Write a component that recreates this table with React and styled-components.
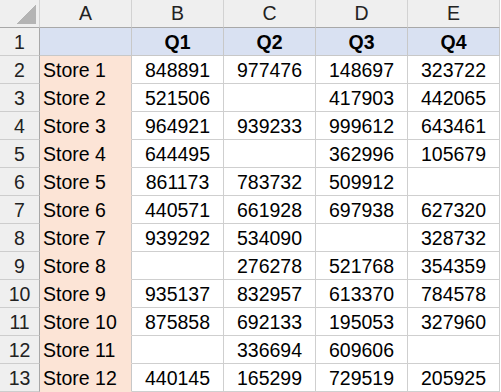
import React from "react";
import styled, { createGlobalStyle } from "styled-components";

const Global = createGlobalStyle`
  html, body { margin: 0; padding: 0; background: #ffffff; }
  body { font-family: "Liberation Sans", Arial, sans-serif; }
`;

const Sheet = styled.div`
  display: grid;
  grid-template-columns: 40px repeat(5, 92px);
  grid-auto-rows: 28px;
  width: 500px;
  font-family: "Liberation Sans", Arial, sans-serif;
  font-size: 19.5px;
`;

const Corner = styled.div`
  box-sizing: border-box;
  background: #efefef;
  border-right: 1px solid #d2d2d2;
  border-bottom: 1px solid #a8a8a8;
  display: flex;
  align-items: flex-end;
  justify-content: flex-end;
  padding: 0 3px 3px 0;
`;

const ColHead = styled.div`
  box-sizing: border-box;
  background: #efefef;
  color: #222;
  border-right: 1px solid #d2d2d2;
  border-bottom: 1px solid #a8a8a8;
  text-align: center;
  line-height: 27px;
`;

const RowHead = styled.div`
  box-sizing: border-box;
  background: #efefef;
  color: #222;
  border-right: 1px solid #a8a8a8;
  border-bottom: 1px solid #cdcdcd;
  text-align: center;
  padding-top: 1px;
  line-height: 26px;
`;

const tones = {
  head: { bg: "#d9e1f2", line: "#c8c8c8", bottom: "#c8c8c8" },
  label: { bg: "#fce4d6", line: "#c8c8c8", bottom: "#fce4d6" },
  value: { bg: "#ffffff", line: "#cfcfcf", bottom: "#cfcfcf" },
};

const Cell = styled.div`
  box-sizing: border-box;
  background: ${(p) => tones[p.$tone].bg};
  border-right: 1px solid ${(p) => tones[p.$tone].line};
  border-bottom: 1px solid ${(p) => tones[p.$tone].bottom};
  color: #000;
  padding-top: 1px;
  line-height: 26px;
  white-space: nowrap;
  overflow: hidden;
  text-align: ${(p) => (p.$tone === "label" ? "left" : "center")};
  padding-left: ${(p) => (p.$tone === "label" ? "3px" : "0")};
  font-weight: ${(p) => (p.$bold ? 700 : 400)};
`;

const Triangle = () => (
  <svg width="20" height="20" viewBox="0 0 20 20" shapeRendering="crispEdges">
    <polygon points="20,0 20,20 0,20" fill="#b4b4b4" />
  </svg>
);

const cols = ["A", "B", "C", "D", "E"];
const data = [
  [848891, 977476, 148697, 323722],
  [521506, "", 417903, 442065],
  [964921, 939233, 999612, 643461],
  [644495, "", 362996, 105679],
  [861173, 783732, 509912, ""],
  [440571, 661928, 697938, 627320],
  [939292, 534090, "", 328732],
  ["", 276278, 521768, 354359],
  [935137, 832957, 613370, 784578],
  [875858, 692133, 195053, 327960],
  ["", 336694, 609606, ""],
  [440145, 165299, 729519, 205925],
];

export default function App() {
  return (
    <>
      <Global />
      <Sheet>
        <Corner>
          <Triangle />
        </Corner>
        {cols.map((c) => (
          <ColHead key={c}>{c}</ColHead>
        ))}
        <RowHead>1</RowHead>
        <Cell $tone="head" />
        {["Q1", "Q2", "Q3", "Q4"].map((q) => (
          <Cell key={q} $tone="head" $bold>
            {q}
          </Cell>
        ))}
        {data.map((row, i) => (
          <React.Fragment key={i}>
            <RowHead>{i + 2}</RowHead>
            <Cell $tone="label">Store {i + 1}</Cell>
            {row.map((v, j) => (
              <Cell key={j} $tone="value">
                {v}
              </Cell>
            ))}
          </React.Fragment>
        ))}
      </Sheet>
    </>
  );
}
